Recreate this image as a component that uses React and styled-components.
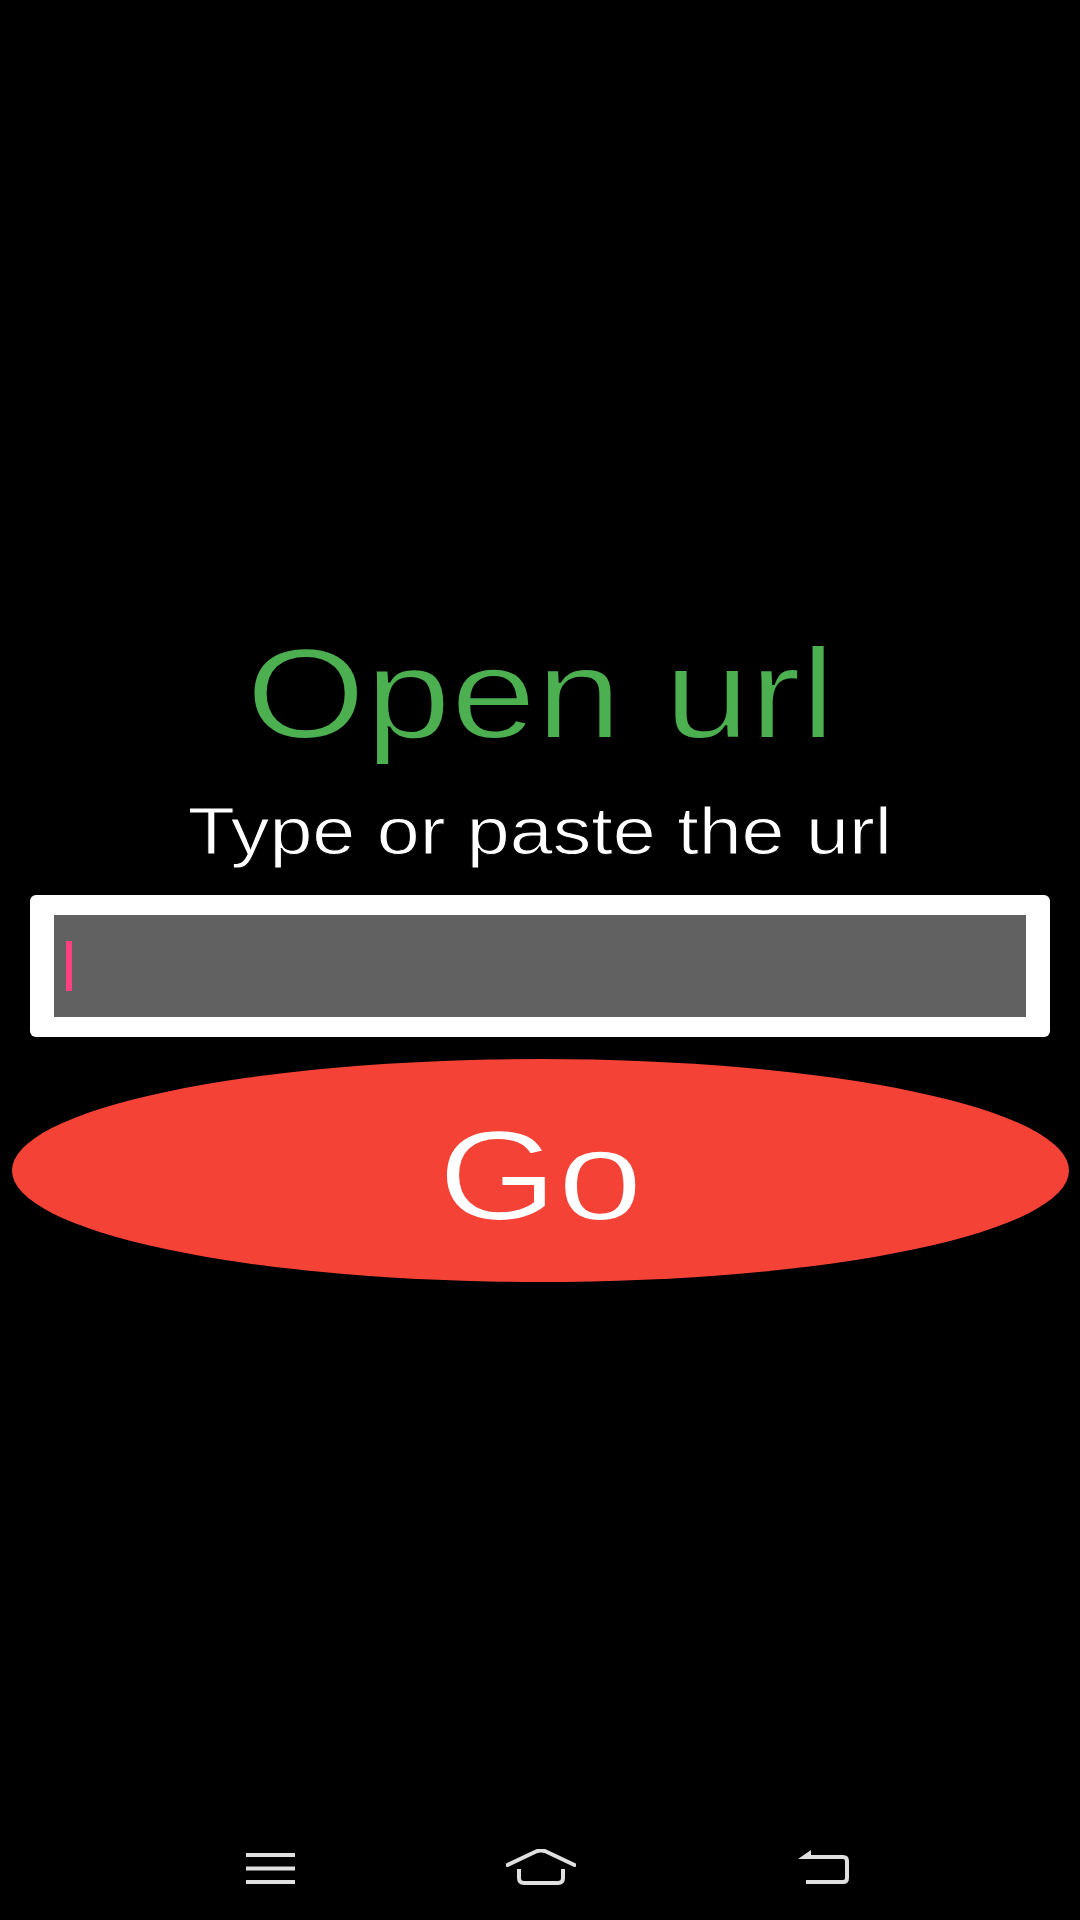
import styled, { createGlobalStyle } from "styled-components";

const GlobalStyle = createGlobalStyle`
  html, body {
    margin: 0;
    padding: 0;
    background: #000;
  }
`;

const Screen = styled.div`
  width: 1080px;
  height: 1920px;
  background: #000;
  display: flex;
  flex-direction: column;
  overflow: hidden;
  font-family: "Liberation Sans", Arial, sans-serif;
`;

const Content = styled.main`
  flex: 1;
  display: flex;
  flex-direction: column;
  align-items: center;
  padding-top: 614px;
`;

const Title = styled.h1`
  margin: 0;
  height: 166px;
  font-size: 128px;
  line-height: 160px;
  font-weight: 400;
  color: #4caf50;
  white-space: nowrap;
  transform: scaleX(1.2);
  -webkit-text-stroke: 2px #000;
`;

const Subtitle = styled.p`
  margin: 0;
  height: 115px;
  font-size: 66px;
  line-height: 103px;
  color: #fff;
  white-space: nowrap;
  transform: scaleX(1.17);
  -webkit-text-stroke: 1px #000;
`;

const InputCard = styled.div`
  width: 1020px;
  height: 142px;
  box-sizing: border-box;
  padding: 20px 24px;
  background: #fff;
  border-radius: 6px;
`;

const InputField = styled.div`
  height: 102px;
  padding-left: 12px;
  background: #616161;
  display: flex;
  align-items: center;
`;

const Caret = styled.span`
  width: 6px;
  height: 50px;
  background: #ff4081;
`;

const GoButton = styled.button`
  width: 1057px;
  height: 223px;
  margin-top: 22px;
  padding: 10px 0 0;
  border: none;
  border-radius: 50%;
  background: #f44336;
  color: #fff;
  font-family: inherit;
  font-size: 128px;
  line-height: 1;
`;

const GoLabel = styled.span`
  display: inline-block;
  transform: scaleX(1.2);
  -webkit-text-stroke: 2px #f44336;
`;

const NavBar = styled.nav`
  height: 79px;
  flex-shrink: 0;
  display: flex;
  align-items: flex-start;
  padding-left: 246px;
`;

const NavIcon = styled.svg`
  display: block;
  flex-shrink: 0;
  margin: 8px 0 0 ${(p) => p.$left || 0}px;
  fill: none;
  stroke: #e0e0e0;
  stroke-width: 4;
`;

function App() {
  return (
    <Screen>
      <GlobalStyle />
      <Content>
        <Title>Open url</Title>
        <Subtitle>Type or paste the url</Subtitle>
        <InputCard>
          <InputField>
            <Caret />
          </InputField>
        </InputCard>
        <GoButton>
          <GoLabel>Go</GoLabel>
        </GoButton>
      </Content>
      <NavBar>
        <NavIcon width="49" height="40" viewBox="0 0 49 40">
          <path d="M0 6H49M0 19.5H49M0 33H49" />
        </NavIcon>
        <NavIcon $left={211} width="70" height="40" viewBox="0 0 70 40">
          <path d="M1.5 16L30 2.5Q35 0.5 40 2.5L68.5 16" strokeLinecap="round" />
          <path d="M13 20V29Q13 34 18 34H52Q57 34 57 29V20" />
        </NavIcon>
        <NavIcon $left={222} width="52" height="40" viewBox="0 0 52 40">
          <path d="M12 8H45Q49 8 49 12V29Q49 33 45 33H8" />
          <path d="M0 10L13 1V10Z" fill="#e0e0e0" stroke="none" />
        </NavIcon>
      </NavBar>
    </Screen>
  );
}

export default App;
